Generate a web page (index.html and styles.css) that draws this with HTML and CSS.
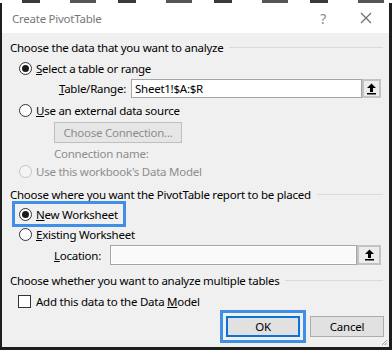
FILE: index.html
```html
<!DOCTYPE html>
<html>
<head>
<meta charset="utf-8">
<link rel="stylesheet" href="styles.css">
</head>
<body>
<div class="topstrip"></div>
<div class="dialog">
  <div class="titlebar">
    <span class="title">Create PivotTable</span>
    <span class="help">?</span>
    <span class="close"><svg width="12" height="12" viewBox="0 0 12 12"><path d="M1 1 L11 11 M11 1 L1 11" stroke="#6a6a6a" stroke-width="1.1" fill="none"/></svg></span>
  </div>
  <div class="content">
    <div class="header h1"><span>Choose the data that you want to analyze</span><i class="rule"></i></div>
    <div class="row r-radio1"><span class="radio checked"></span><span><u>S</u>elect a table or range</span></div>
    <div class="row r-table">
      <span class="label lbl-table"><u>T</u>able/Range:</span>
      <span class="input input-table">Sheet1!$A:$R</span>
      <span class="picker"><svg width="11" height="12" viewBox="0 0 11 12"><path d="M5.5 0.5 L10 5 L7 5 L7 9 L4 9 L4 5 L1 5 Z" fill="#000"/><rect x="1" y="10" width="9" height="1.5" fill="#000"/></svg></span>
    </div>
    <div class="row r-radio2"><span class="radio"></span><span><u>U</u>se an external data source</span></div>
    <div class="row r-conn"><span class="btn btn-conn">Choose Connection...</span></div>
    <div class="row r-connname"><span class="disabled-text">Connection name:</span></div>
    <div class="row r-radio3"><span class="radio disabled"></span><span class="disabled-text">Use this workbook's Data Model</span></div>
    <div class="header h2"><span>Choose where you want the PivotTable report to be placed</span><i class="rule"></i></div>
    <div class="row r-new"><span class="focus"><span class="radio checked"></span><span><u>N</u>ew Worksheet</span></span></div>
    <div class="row r-exist"><span class="radio"></span><span><u>E</u>xisting Worksheet</span></div>
    <div class="row r-loc">
      <span class="label lbl-loc"><u>L</u>ocation:</span>
      <span class="input input-loc"></span>
      <span class="picker"><svg width="11" height="12" viewBox="0 0 11 12"><path d="M5.5 0.5 L10 5 L7 5 L7 9 L4 9 L4 5 L1 5 Z" fill="#000"/><rect x="1" y="10" width="9" height="1.5" fill="#000"/></svg></span>
    </div>
    <div class="header h3"><span>Choose whether you want to analyze multiple tables</span><i class="rule"></i></div>
    <div class="row r-check"><span class="checkbox"></span><span>Add this data to the Data <u>M</u>odel</span></div>
    <div class="row r-buttons">
      <span class="okring"><span class="btn btn-ok">OK</span></span>
      <span class="btn btn-cancel">Cancel</span>
    </div>
  </div>
  <svg class="grip" width="7" height="7" viewBox="0 0 7 7"><path d="M6 1 L1 6 M6 3.5 L3.5 6 M6 5.5 L5.5 6" stroke="#a0a0a0" stroke-width="1" fill="none"/></svg>
</div>
</body>
</html>
```
FILE: styles.css
```css
html, body {
  margin: 0;
  padding: 0;
}
body {
  width: 392px;
  height: 350px;
  background: #1e1e1e;
  font-family: "Noto Sans", "Segoe UI", sans-serif;
  font-size: 11.5px;
  letter-spacing: -0.25px;
  color: #000;
  overflow: hidden;
}
.topstrip {
  height: 3px;
  background: repeating-linear-gradient(90deg, #ffffff 0 22px, #3a3a3a 22px 40px, #ffffff 40px 70px, #555 70px 96px);
}
.dialog {
  position: relative;
  margin-left: 2px;
  width: 387px;
  height: 344px;
  background: #f0f0f0;
}
.titlebar {
  height: 30px;
  background: #fff;
  display: flex;
  align-items: center;
  padding-left: 10px;
}
.title {
  color: #777;
  flex: 1;
}
.help {
  color: #8a8a8a;
  font-size: 14px;
  margin-right: 34px;
}
.close {
  display: flex;
  margin-right: 17px;
}
.content {
  padding: 4px 0 0 8px;
}
.row {
  display: flex;
  align-items: center;
}
.header {
  display: flex;
  align-items: center;
  white-space: nowrap;
}
.rule {
  flex: 1;
  height: 1px;
  background: #dadada;
  margin-left: 6px;
  margin-right: 6px;
}
.h1 { height: 20px; }
.h2 { height: 14px; margin-top: 9px; }
.h3 { height: 16px; margin-top: 7px; }
.radio {
  width: 11px;
  height: 11px;
  border: 1px solid #333;
  border-radius: 50%;
  background: #fff;
  margin-left: 9px;
  margin-right: 4px;
  flex: none;
  position: relative;
}
.radio.checked::after {
  content: "";
  position: absolute;
  left: 2px;
  top: 2px;
  width: 7px;
  height: 7px;
  border-radius: 50%;
  background: #1a1a1a;
}
.radio.disabled {
  border-color: #c4c4c4;
  background: #f4f4f4;
}
.disabled-text {
  color: #8d8d8d;
}
.r-radio1 { height: 22px; }
.r-table { height: 19px; }
.lbl-table { width: 116px; text-align: right; margin-right: 5px; }
.input {
  box-sizing: border-box;
  height: 19px;
  border: 1px solid #a5a5a5;
  background: #fff;
  display: flex;
  align-items: center;
  padding-left: 3px;
}
.input-table { width: 231px; }
.picker {
  box-sizing: border-box;
  width: 19px;
  height: 19px;
  border: 2px solid #c3c3c3;
  background: #ececec;
  display: flex;
  align-items: center;
  justify-content: center;
}
.r-radio2 { height: 24px; }
.r-conn { height: 21px; }
.btn {
  box-sizing: border-box;
  display: flex;
  align-items: center;
  justify-content: center;
  height: 21px;
  background: #e1e1e1;
  border: 1px solid #adadad;
}
.btn-conn {
  margin-left: 44px;
  width: 128px;
  color: #8d8d8d;
  border-color: #bfbfbf;
  background: #e6e6e6;
}
.r-connname { height: 21px; padding-left: 44px; }
.r-radio3 { height: 14px; }
.r-new { height: 26px; }
.focus {
  box-sizing: border-box;
  height: 26px;
  display: flex;
  align-items: center;
  border: 3px solid #3f8fe6;
  margin-left: 2px;
  padding-right: 5px;
}
.focus .radio { margin-left: 4px; }
.r-exist { height: 14px; }
.r-loc { height: 20px; margin-top: 4px; }
.lbl-loc { margin-left: 44px; width: 56px; }
.input-loc {
  width: 247px;
  height: 20px;
  background: #fafafa;
  border: 1px solid #a5a5a5;
  box-shadow: inset 0 0 0 1px #fff;
}
.r-loc .picker { height: 20px; width: 24px; }
.r-check { height: 18px; margin-top: 4px; }
.checkbox {
  box-sizing: border-box;
  width: 13px;
  height: 13px;
  border: 1px solid #333;
  background: #fff;
  margin-left: 8px;
  margin-right: 5px;
}
.r-buttons {
  height: 33px;
  margin-top: 0;
  justify-content: flex-end;
  padding-right: 5px;
}
.okring {
  box-sizing: border-box;
  width: 86px;
  height: 33px;
  border: 3px solid #3f8fe6;
  display: flex;
  align-items: center;
  justify-content: center;
  margin-right: 4px;
}
.btn-ok {
  width: 74px;
  border: 2px solid #0a74d6;
}
.btn-cancel {
  width: 74px;
}
.grip {
  position: absolute;
  right: 1px;
  bottom: 1px;
}
```
